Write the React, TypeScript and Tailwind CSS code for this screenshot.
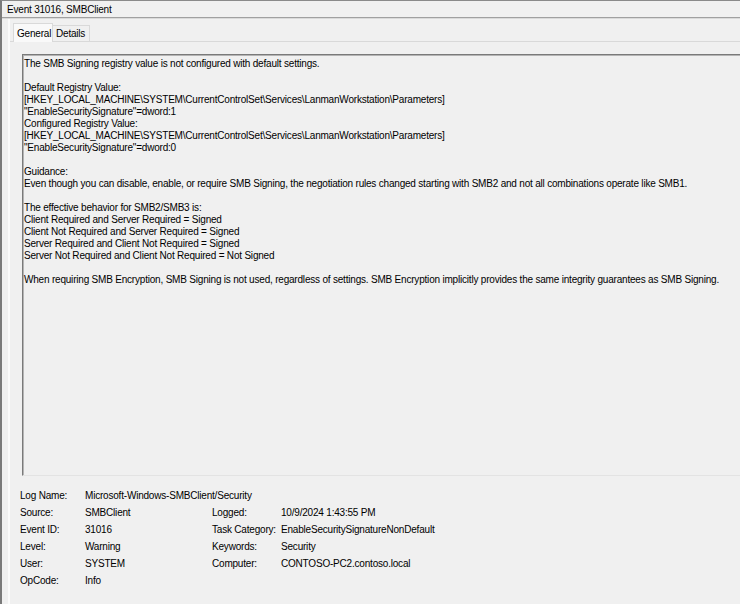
import React from 'react';

const message = [
  'The SMB Signing registry value is not configured with default settings.',
  '',
  'Default Registry Value:',
  '[HKEY_LOCAL_MACHINE\\SYSTEM\\CurrentControlSet\\Services\\LanmanWorkstation\\Parameters]',
  '"EnableSecuritySignature"=dword:1',
  'Configured Registry Value:',
  '[HKEY_LOCAL_MACHINE\\SYSTEM\\CurrentControlSet\\Services\\LanmanWorkstation\\Parameters]',
  '"EnableSecuritySignature"=dword:0',
  '',
  'Guidance:',
  'Even though you can disable, enable, or require SMB Signing, the negotiation rules changed starting with SMB2 and not all combinations operate like SMB1.',
  '',
  'The effective behavior for SMB2/SMB3 is:',
  'Client Required and Server Required = Signed',
  'Client Not Required and Server Required = Signed',
  'Server Required and Client Not Required = Signed',
  'Server Not Required and Client Not Required = Not Signed',
  '',
  'When requiring SMB Encryption, SMB Signing is not used, regardless of settings. SMB Encryption implicitly provides the same integrity guarantees as SMB Signing.',
];

const details: [string, string, string?, string?][] = [
  ['Source:', 'SMBClient', 'Logged:', '10/9/2024 1:43:55 PM'],
  ['Event ID:', '31016', 'Task Category:', 'EnableSecuritySignatureNonDefault'],
  ['Level:', 'Warning', 'Keywords:', 'Security'],
  ['User:', 'SYSTEM', 'Computer:', 'CONTOSO-PC2.contoso.local'],
  ['OpCode:', 'Info'],
];

export default function App() {
  return (
    <div className="w-[740px] h-[604px] overflow-hidden bg-[#f0f0f0] border-t border-l-2 border-t-[#8a8a8a] border-l-[#7a7a7a] text-black text-[10px] tracking-[-0.2px] font-['Liberation_Sans',Arial,sans-serif] flex flex-col">
      {/* title */}
      <div className="h-[17px] shrink-0 pl-[5px] flex items-center border-b border-[#a0a0a0] whitespace-nowrap">
        Event 31016, SMBClient
      </div>
      <div className="h-px shrink-0 bg-[#dadada]" />

      <div className="flex-1 ml-[6px] border-l-2 border-[#fbfbfb] flex flex-col">
        {/* tabs */}
        <div className="h-[23px] shrink-0 pl-[3px] flex items-end border-b border-[#d9d9d9]">
          <div className="w-[40px] h-[19px] -mb-px bg-[#f9f9f9] border border-b-0 border-[#d9d9d9] flex items-center pl-[3px]">
            General
          </div>
          <div className="w-[37px] h-[16px] border-t border-r border-[#d9d9d9] flex items-center pl-[3px]">
            Details
          </div>
        </div>

        {/* tab page */}
        <div className="flex-1 pt-[12px] flex flex-col">
          <div className="ml-[12px] w-[760px] h-[422px] shrink-0 border-t border-l border-[#7a7a7a] border-b border-b-[#e3e3e3] shadow-[inset_1px_1px_0_#b4b4b4] pl-[1px] pt-[3px] leading-[12px] whitespace-nowrap">
            {message.map((line, i) =>
              line ? <div key={i}>{line}</div> : <div key={i} className="h-[12px]" />
            )}
          </div>

          <div className="pl-[10px] pt-[11px] grid grid-cols-[65px_127px_69px_1fr] auto-rows-[17px] items-center whitespace-nowrap">
            <div>Log Name:</div>
            <div className="col-span-3">Microsoft-Windows-SMBClient/Security</div>
            {details.map(([a, b, c, d], i) => (
              <React.Fragment key={i}>
                <div>{a}</div>
                <div>{b}</div>
                <div>{c ?? ''}</div>
                <div>{d ?? ''}</div>
              </React.Fragment>
            ))}
          </div>
        </div>
      </div>
    </div>
  );
}
